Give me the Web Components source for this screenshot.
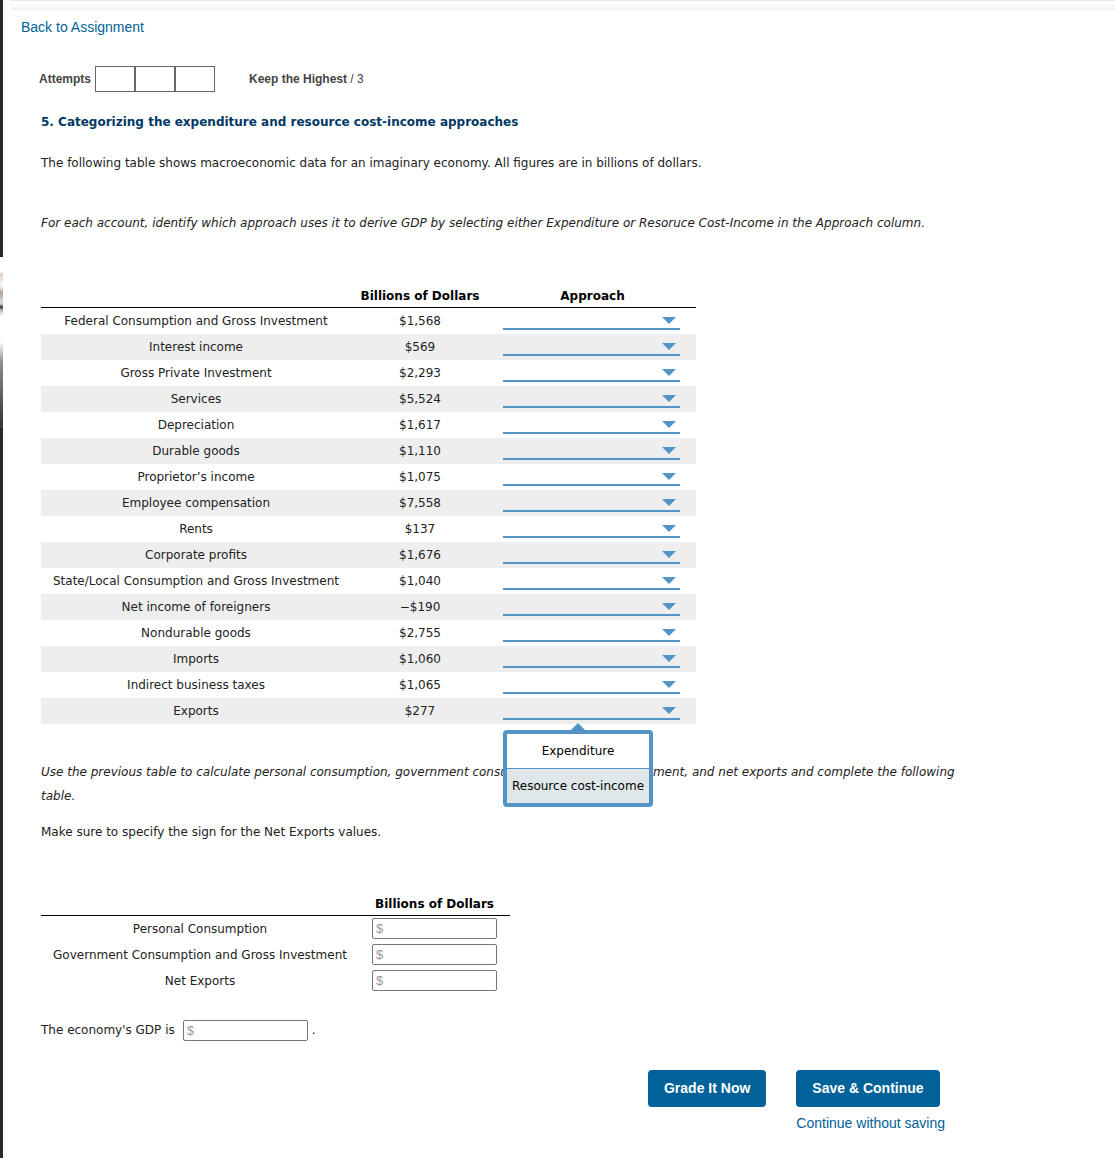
<!DOCTYPE html>
<html lang="en">
<head>
<meta charset="utf-8">
<title>Categorizing the expenditure and resource cost-income approaches</title>
<style>
  body { margin: 0; background: #fff; }
</style>
</head>
<body>
<assignment-page></assignment-page>

<script>
const define = (name, html, setup) => {
  const template = document.createElement('template');
  template.innerHTML = html;
  customElements.define(name, class extends HTMLElement {
    constructor() {
      super();
      this.attachShadow({ mode: 'open' }).append(template.content.cloneNode(true));
    }
    connectedCallback() {
      if (setup && !this.ready) { this.ready = true; setup(this, this.shadowRoot); }
    }
  });
};

define('side-strip', `
  <style>
    :host {
      display: block; flex: none; width: 3px;
      background: linear-gradient(#22292f 0 257px, #fff 257px 272px, #ddd0c0 274px, #fbfaf8 286px,
        #a99f90 293px, #d8d4cf 300px, #d8d4cf 304px, #3a3638 307px, #b5b5b8 310px, #fff 316px,
        #fff 342px, #8f8f8f 362px, #333 426px, #555 427px, #22292f 428px);
    }
  </style>`);

define('attempt-bar', `
  <style>
    :host { display: flex; align-items: center; font: 12px/16px "Liberation Sans", Arial, sans-serif; color: #444; }
    .boxes { display: flex; margin: 0 34px 0 4px; }
    .boxes i { width: 38px; height: 24px; border: 1px solid #666; }
  </style>
  <b>Attempts</b>
  <span class="boxes"><i></i><i></i><i></i></span>
  <span><b>Keep the Highest</b> / 3</span>`);

define('option-menu', `
  <style>
    :host { position: absolute; z-index: 2; left: 0; top: 100%; margin-top: 3px; }
    .tip { display: block; width: 0; margin: 0 auto; border: 7px solid transparent; border-top: 0; border-bottom-color: #5294c6; }
    .list { box-sizing: border-box; width: 150px; border: 4px solid #5294c6; border-radius: 4px; background: #fff; }
    button {
      display: block; width: 100%; height: 34px; padding: 0; border: 0; background: #fff;
      font: inherit; color: #000; white-space: nowrap; cursor: pointer;
    }
    button + button { height: 35px; border-top: 1px solid #5294c6; background: #dfe7e9; }
  </style>
  <i class="tip"></i>
  <div class="list"><button type="button">Expenditure</button><button type="button">Resource cost-income</button></div>`);

define('approach-select', `
  <style>
    :host { display: block; position: relative; width: 177px; height: 22px; margin: 0 16px 4px 14px; }
    select {
      appearance: none; display: block; box-sizing: border-box; width: 100%; height: 22px; padding: 0 24px 0 4px;
      border: 0; border-bottom: 2px solid #5294c6; border-radius: 0; background: transparent; font: inherit;
    }
    svg { position: absolute; right: 4px; top: 9px; width: 14px; height: 7px; pointer-events: none; }
  </style>
  <select><option></option><option>Expenditure</option><option>Resource cost-income</option></select>
  <svg viewBox="0 0 14 7"><path d="M0 0H14L7 7Z" fill="#5294c6"/></svg>`,
  (host, root) => {
    root.querySelector('select').setAttribute('aria-label', 'Approach for ' + host.getAttribute('label'));
    if (host.hasAttribute('open')) root.append(document.createElement('option-menu'));
  });

define('money-input', `
  <style>
    :host { display: block; width: 125px; }
    input {
      display: block; box-sizing: border-box; width: 100%; height: 21px; padding: 0 3px;
      border: 1px solid #767676; border-radius: 2px; background: #fff; font: 13px "Liberation Sans", Arial, sans-serif;
    }
    input::placeholder { color: #999; opacity: 1; }
  </style>
  <input type="text" placeholder="$">`,
  (host, root) => root.querySelector('input').setAttribute('aria-label', host.getAttribute('label')));

const tableStyle = `
  :host { display: block; }
  table { border-collapse: separate; border-spacing: 0; table-layout: fixed; text-align: center; }
  th, td { padding: 0; font-size: 12px; line-height: 16px; }
  thead th { box-sizing: border-box; height: 25px; padding-top: 1px; border-bottom: 1px solid #000; color: #000; }
  tbody th { font-weight: normal; }
  tbody tr { height: 26px; }`;

define('account-table', `
  <style>
    ${tableStyle}
    table { width: 655px; }
    .name { width: 310px; } .amount { width: 138px; }
    tbody tr:nth-child(even) { background: #eee; }
  </style>
  <table>
    <thead><tr><th class="name"></th><th class="amount">Billions of Dollars</th><th>Approach</th></tr></thead>
    <tbody></tbody>
  </table>`,
  (host, root) => {
    const rows = [
      ['Federal Consumption and Gross Investment', '$1,568'], ['Interest income', '$569'],
      ['Gross Private Investment', '$2,293'], ['Services', '$5,524'], ['Depreciation', '$1,617'],
      ['Durable goods', '$1,110'], ['Proprietor’s income', '$1,075'], ['Employee compensation', '$7,558'],
      ['Rents', '$137'], ['Corporate profits', '$1,676'],
      ['State/Local Consumption and Gross Investment', '$1,040'], ['Net income of foreigners', '−$190'],
      ['Nondurable goods', '$2,755'], ['Imports', '$1,060'], ['Indirect business taxes', '$1,065'], ['Exports', '$277']
    ];
    root.querySelector('tbody').innerHTML = rows.map(([name, amount], i) =>
      `<tr><th scope="row">${name}</th><td>${amount}</td><td><approach-select label="${name}"${i === rows.length - 1 ? ' open' : ''}></approach-select></td></tr>`).join('');
  });

define('answer-table', `
  <style>
    ${tableStyle}
    table { width: 469px; }
    .name { width: 318px; }
    money-input { margin: 2px auto 3px; }
  </style>
  <table>
    <thead><tr><th class="name"></th><th>Billions of Dollars</th></tr></thead>
    <tbody></tbody>
  </table>`,
  (host, root) => {
    root.querySelector('tbody').innerHTML = ['Personal Consumption', 'Government Consumption and Gross Investment', 'Net Exports']
      .map(name => `<tr><th scope="row">${name}</th><td><money-input label="${name}"></money-input></td></tr>`).join('');
  });

define('page-actions', `
  <style>
    :host { display: flex; justify-content: flex-end; align-items: flex-start; gap: 30px; font: 14px/16px "Liberation Sans", Arial, sans-serif; }
    .stack { display: flex; flex-direction: column; align-items: flex-start; gap: 8px; }
    button {
      height: 37px; padding: 0 16px 2px; border: 0; border-radius: 4px; background: #006298; color: #fff;
      font: bold 14px/16px "Liberation Sans", Arial, sans-serif; cursor: pointer;
    }
    a { color: #006298; text-decoration: none; }
  </style>
  <button type="button">Grade It Now</button>
  <div class="stack"><button type="button">Save &amp; Continue</button><a href="#continue">Continue without saving</a></div>`);

define('assignment-page', `
  <style>
    :host { display: flex; min-height: 100vh; font: 12px/24px "DejaVu Sans", Verdana, sans-serif; color: #222; }
    main { flex: 1; min-width: 0; padding-left: 8px; }
    .band { height: 10px; box-sizing: border-box; border-top: 1px solid #dfeaf0; background: linear-gradient(#fff 20%, #eff2f4); }
    .back { display: block; width: fit-content; margin: 9px 0 0 10px; font: 14px/16px "Liberation Sans", Arial, sans-serif; color: #006298; text-decoration: none; }
    attempt-bar { margin: 31px 0 0 28px; }
    .body { max-width: 920px; margin-left: 30px; }
    h1 { margin: 18px 0 0; font-size: 12px; line-height: 24px; color: #003865; }
    p { margin: 0; }
    .intro { margin-top: 17px; }
    .task { margin-top: 36px; }
    account-table { margin-top: 48px; }
    .use { margin-top: 36px; }
    .sign { margin-top: 12px; }
    answer-table { margin-top: 47px; }
    .gdp { display: flex; align-items: center; margin-top: 24px; }
    .gdp money-input { margin: 0 4px 0 8px; }
    page-actions { max-width: 904px; margin: 28px 0 27px 30px; }
  </style>
  <side-strip></side-strip>
  <main>
    <div class="band"></div>
    <a class="back" href="#assignment">Back to Assignment</a>
    <attempt-bar></attempt-bar>
    <div class="body">
      <h1>5. Categorizing the expenditure and resource cost-income approaches</h1>
      <p class="intro">The following table shows macroeconomic data for an imaginary economy. All figures are in billions of dollars.</p>
      <p class="task"><em>For each account, identify which approach uses it to derive GDP by selecting either Expenditure or Resoruce Cost-Income in the Approach column.</em></p>
      <account-table></account-table>
      <p class="use"><em>Use the previous table to calculate personal consumption, government consumption and gross investment, and net exports and complete the following table.</em></p>
      <p class="sign">Make sure to specify the sign for the Net Exports values.</p>
      <answer-table></answer-table>
      <div class="gdp"><span>The economy's GDP is</span><money-input label="The economy's GDP"></money-input><span>.</span></div>
    </div>
    <page-actions></page-actions>
  </main>`);
</script>
</body>
</html>
